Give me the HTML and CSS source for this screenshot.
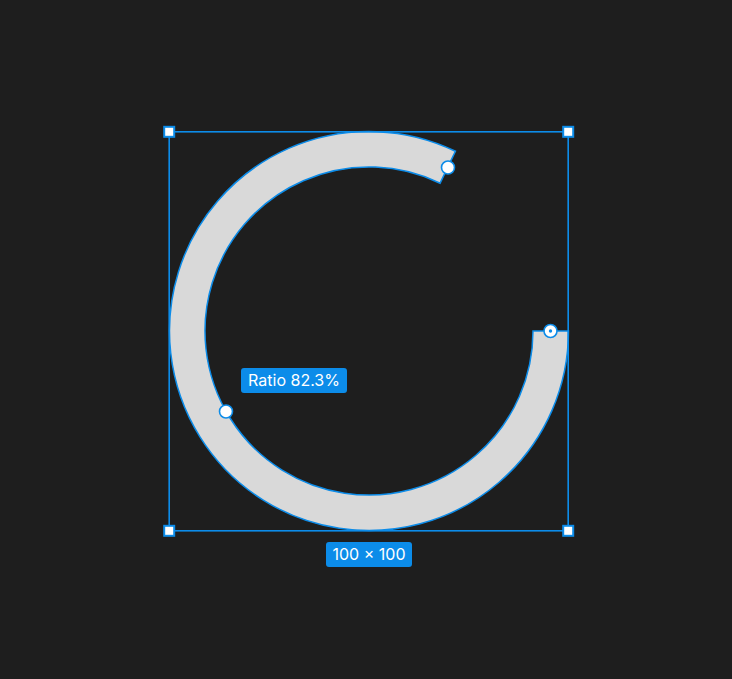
FILE: index.html
```html
<!DOCTYPE html>
<html>
<head>
<meta charset="utf-8">
<link rel="stylesheet" href="styles.css">
</head>
<body>
<div class="canvas">
  <svg class="art" width="732" height="679" viewBox="0 0 732 679">
    <path class="arc" d="M 568.5 331 A 199.5 199.5 0 1 1 455.5 151.2 L 440.1 183.2 A 164 164 0 1 0 533 331 Z"/>
    <rect class="frame" x="169.2" y="131.8" width="399" height="399"/>
    <rect class="corner" x="164.2" y="126.8" width="10" height="10"/>
    <rect class="corner" x="563.2" y="126.8" width="10" height="10"/>
    <rect class="corner" x="164.2" y="525.8" width="10" height="10"/>
    <rect class="corner" x="563.2" y="525.8" width="10" height="10"/>
    <circle class="knob" cx="448" cy="167.5" r="6.5"/>
    <circle class="knob" cx="226" cy="411.5" r="6.5"/>
    <circle class="knob" cx="550.5" cy="331" r="6.5"/>
    <circle class="dot" cx="550.5" cy="331" r="1.7"/>
  </svg>
  <div class="tag tag-ratio">Ratio 82.3%</div>
  <div class="tag tag-size">100 × 100</div>
</div>
</body>
</html>
```
FILE: styles.css
```css
html, body {
  margin: 0;
  padding: 0;
  background: #1e1e1e;
}
.canvas {
  position: relative;
  width: 732px;
  height: 679px;
  overflow: hidden;
  background: #1e1e1e;
}
.art {
  display: block;
}
.arc {
  fill: #d9d9d9;
  stroke: #0c8ce9;
  stroke-width: 1.5;
}
.frame {
  fill: none;
  stroke: #0c8ce9;
  stroke-width: 1.6;
}
.corner {
  fill: #ffffff;
  stroke: #0c8ce9;
  stroke-width: 2;
}
.knob {
  fill: #ffffff;
  stroke: #0c8ce9;
  stroke-width: 1.6;
}
.dot {
  fill: #0c8ce9;
}
.tag {
  position: absolute;
  height: 25px;
  line-height: 25px;
  border-radius: 3px;
  background: #0c8ce9;
  color: #ffffff;
  font-family: Inter, "Noto Sans", sans-serif;
  font-size: 16px;
  font-weight: 400;
  white-space: nowrap;
  box-sizing: border-box;
  text-align: center;
}
.tag-ratio {
  left: 241px;
  top: 368px;
  width: 106px;
}
.tag-size {
  left: 326px;
  top: 542px;
  width: 86px;
}
```
